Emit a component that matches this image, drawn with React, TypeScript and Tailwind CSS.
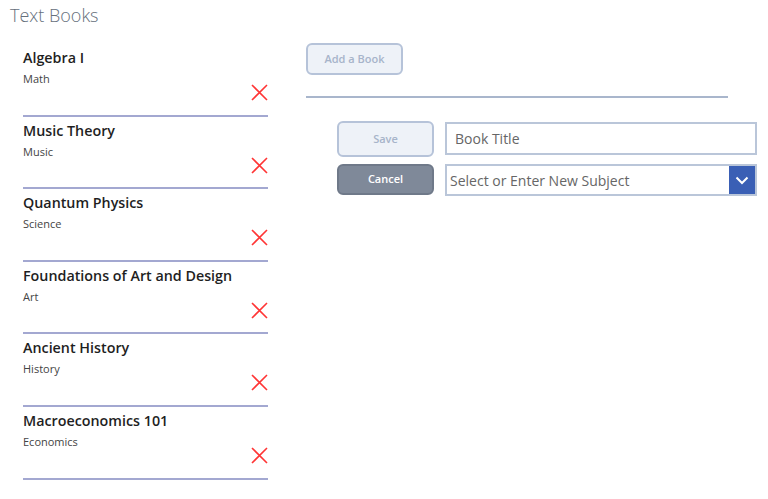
import React from "react";

const books = [
  { title: "Algebra I", subject: "Math" },
  { title: "Music Theory", subject: "Music" },
  { title: "Quantum Physics", subject: "Science" },
  { title: "Foundations of Art and Design", subject: "Art" },
  { title: "Ancient History", subject: "History" },
  { title: "Macroeconomics 101", subject: "Economics" },
];

function XIcon() {
  return (
    <svg width="17" height="17" viewBox="0 0 17 17" fill="none">
      <path d="M1 1 L16 16 M16 1 L1 16" stroke="#ff3535" strokeWidth="1.6" />
    </svg>
  );
}

export default function App() {
  return (
    <div
      className="w-[768px] h-[499px] bg-white overflow-hidden relative"
      style={{ fontFamily: '"Open Sans", "Noto Sans", sans-serif' }}
    >
      <div className="pl-[10px] pt-[2px] h-[43px] text-[18px] leading-[26px] font-light text-[#66707c]">
        Text Books
      </div>
      <div className="flex">
        <div className="ml-[23px] w-[245px] flex flex-col pt-[1px]">
          {books.map((b) => (
            <div
              key={b.title}
              className="h-[72.6px] border-b-2 border-[#a3a8d1] relative pt-[4px]"
            >
              <div className="text-[14.3px] leading-[20px] font-semibold text-[#1f1f1f]">
                {b.title}
              </div>
              <div className="text-[11px] leading-[15px] mt-[3px] text-[#444]">
                {b.subject}
              </div>
              <div className="absolute right-0 top-[40px]">
                <XIcon />
              </div>
            </div>
          ))}
        </div>
        <div className="ml-[38px] flex flex-col">
          <button className="w-[97px] h-[32px] rounded-[6px] border-2 border-[#b6c3d9] bg-[#eef2f8] text-[11px] text-[#a7b4ca] font-semibold">
            Add a Book
          </button>
          <div className="mt-[21px] w-[422px] h-[2px] bg-[#a9b6cc]" />
          <div className="mt-[23px] ml-[31px] flex gap-[11px]">
            <div className="flex flex-col gap-[7px]">
              <button className="w-[97px] h-[36px] rounded-[6px] border-2 border-[#b6c3d9] bg-[#eef2f8] text-[11px] text-[#a7b4ca] font-semibold">
                Save
              </button>
              <button className="w-[97px] h-[31px] rounded-[6px] border-2 border-[#6f7989] bg-[#7f8999] text-[11px] text-white font-semibold">
                Cancel
              </button>
            </div>
            <div className="flex flex-col gap-[9px] pt-[1px]">
              <div className="w-[312px] h-[33px] border-2 border-[#bac6d9] flex items-center pl-[8px] text-[14px] text-[#666]">
                Book Title
              </div>
              <div className="w-[312px] h-[32px] border-2 border-[#bac6d9] flex items-center">
                <div className="flex-1 pl-[3px] text-[14px] text-[#666]">
                  Select or Enter New Subject
                </div>
                <div className="w-[26px] h-full bg-[#3a5fb5] flex items-center justify-center">
                  <svg width="14" height="9" viewBox="0 0 14 9" fill="none">
                    <path d="M1.5 1.5 L7 7 L12.5 1.5" stroke="white" strokeWidth="2" />
                  </svg>
                </div>
              </div>
            </div>
          </div>
        </div>
      </div>
    </div>
  );
}
